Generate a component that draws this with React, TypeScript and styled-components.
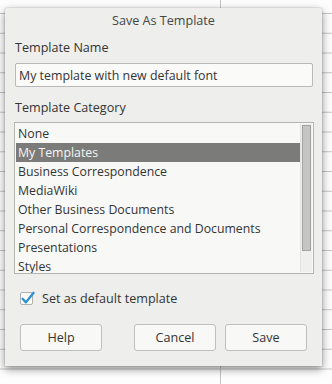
import styled, { createGlobalStyle } from "styled-components";

const GlobalStyle = createGlobalStyle`
  html, body {
    margin: 0;
    padding: 0;
  }
  body {
    font-family: "Open Sans", "Noto Sans", sans-serif;
    color: #333534;
  }
`;

const categories = [
  "None",
  "My Templates",
  "Business Correspondence",
  "MediaWiki",
  "Other Business Documents",
  "Personal Correspondence and Documents",
  "Presentations",
  "Styles",
];

export default function App() {
  return (
    <Sheet>
      <GlobalStyle />
      <Dialog>
        <Title>Save As Template</Title>
        <Content>
          <Label>Template Name</Label>
          <Input defaultValue="My template with new default font" />
          <Label top={11}>Template Category</Label>
          <ListBox>
            <Rows>
              {categories.map(c => (
                <Row key={c} selected={c === "My Templates"}>
                  {c}
                </Row>
              ))}
            </Rows>
            <Track>
              <Thumb />
            </Track>
          </ListBox>
          <CheckRow>
            <CheckBox>
              <svg width="17" height="17" viewBox="0 0 17 17">
                <path
                  d="M3.6 8.8 L6.9 12.4 L14.6 2.8"
                  fill="none"
                  stroke="#2c8fd1"
                  strokeWidth="2.3"
                  strokeLinecap="round"
                  strokeLinejoin="round"
                />
              </svg>
            </CheckBox>
            Set as default template
          </CheckRow>
          <Buttons>
            <Button>Help</Button>
            <Spacer />
            <Button>Cancel</Button>
            <Button>Save</Button>
          </Buttons>
        </Content>
      </Dialog>
    </Sheet>
  );
}

const Sheet = styled.div`
  width: 332px;
  height: 384px;
  box-sizing: border-box;
  padding: 8px 10px 0 5px;
  overflow: hidden;
  background-color: #fdfdfd;
  background-image: linear-gradient(to right, #c4c4c4 1px, transparent 1px),
    linear-gradient(to bottom, #c4c4c4 1px, transparent 1px);
  background-size: 82px 19.75px;
  background-position: 56px 13px;
`;

const Dialog = styled.div`
  width: 317px;
  height: 358px;
  display: flex;
  flex-direction: column;
  background: #eeeeec;
  border-radius: 3px 3px 0 0;
  box-shadow: 0 3px 9px rgba(0, 0, 0, 0.45), 0 0 0 1px rgba(0, 0, 0, 0.06);
`;

const Title = styled.div`
  height: 26px;
  line-height: 26px;
  text-align: center;
  font-size: 12.6px;
  color: #444645;
`;

const Content = styled.div`
  display: flex;
  flex-direction: column;
  padding: 0 9px 0 10px;
`;

const Label = styled.div<{ top?: number }>`
  margin-top: ${p => (p.top ?? 4)}px;
  height: 20px;
  line-height: 20px;
  font-size: 12.6px;
`;

const Input = styled.input`
  margin-top: 5px;
  height: 24px;
  box-sizing: border-box;
  border: 1px solid #b9bab7;
  border-radius: 2px;
  background: #fafaf9;
  padding: 0 3px;
  font-family: inherit;
  font-size: 12.4px;
  color: #333534;
  outline: none;
`;

const ListBox = styled.div`
  margin: 4px -1px 0;
  height: 152px;
  box-sizing: border-box;
  border: 1px solid #b4b5b2;
  padding: 1px;
  display: flex;
  background: #f8f8f7;
  overflow: hidden;
`;

const Rows = styled.div`
  flex: 1;
  display: flex;
  flex-direction: column;
`;

const Row = styled.div<{ selected?: boolean }>`
  flex: none;
  height: 19px;
  line-height: 19px;
  padding-left: 2px;
  font-size: 12.3px;
  white-space: nowrap;
  background: ${p => (p.selected ? "#7b7c79" : "transparent")};
  color: ${p => (p.selected ? "#f4f4f3" : "#333534")};
`;

const Track = styled.div`
  width: 12px;
  box-sizing: border-box;
  padding: 1px;
  background: #efefed;
  border-left: 1px solid #e2e2e0;
`;

const Thumb = styled.div`
  height: 126px;
  box-sizing: border-box;
  border: 1px solid #a3a4a1;
  background: #c5c6c3;
`;

const CheckRow = styled.div`
  margin-top: 14px;
  height: 20px;
  display: flex;
  align-items: center;
  gap: 9px;
  padding-left: 5px;
  font-size: 12.6px;
`;

const CheckBox = styled.span`
  position: relative;
  width: 13px;
  height: 13px;
  box-sizing: border-box;
  border: 1px solid #b0b1ae;
  border-radius: 2px;
  background: #fbfbfa;

  & svg {
    position: absolute;
    left: -2px;
    top: -3px;
  }
`;

const Buttons = styled.div`
  margin-top: 16px;
  display: flex;
  gap: 9px;
  padding: 0 6px 0 5px;
`;

const Spacer = styled.div`
  flex: 1;
`;

const Button = styled.button`
  width: 82px;
  height: 27px;
  box-sizing: border-box;
  border: 1px solid #bfc0bd;
  border-radius: 3px;
  background: #f8f8f7;
  font-family: inherit;
  font-size: 12.6px;
  color: #333534;
  padding: 0;
`;
